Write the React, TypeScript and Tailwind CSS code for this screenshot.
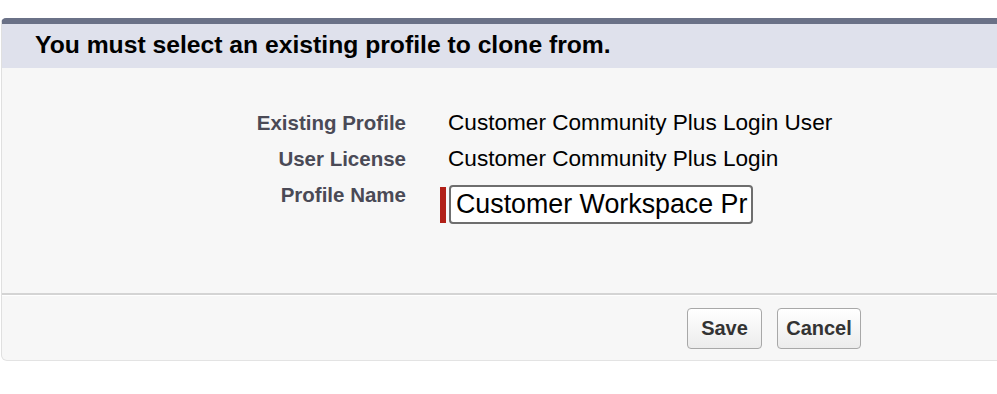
import React from "react";

export default function App() {
  return (
    <div className="w-[997px] h-[394px] overflow-hidden bg-white" style={{ fontFamily: '"Liberation Sans", Arial, sans-serif' }}>
      <div className="mt-[18px] ml-[1px] w-[1010px] rounded-t-[5px] rounded-bl-[6px] border-t-[6px] border-t-[#6a7187] border-l border-l-[#e0e0e0] border-b-[1.5px] border-b-[#e3e3e3] bg-[#f7f7f7] overflow-hidden">
        <div className="h-[44px] bg-[#dfe1ec] pl-[33px] pt-[7px]">
          <h2 className="text-[24.7px] leading-[28px] font-bold text-black">You must select an existing profile to clone from.</h2>
        </div>
        <div className="h-[225px] pt-[43px]">
          <div className="grid grid-cols-[404px_1fr] gap-x-[42px] gap-y-[12px] leading-[24px]">
            <div className="text-right font-bold text-[20.5px] text-[#4a4a56]">Existing Profile</div>
            <div className="text-black text-[22.6px]">Customer Community Plus Login User</div>
            <div className="text-right font-bold text-[20.5px] text-[#4a4a56]">User License</div>
            <div className="text-black text-[22.6px]">Customer Community Plus Login</div>
            <div className="text-right font-bold text-[20.5px] text-[#4a4a56]">Profile Name</div>
            <div className="-ml-[8px] flex items-center gap-[3px] pt-[2px]">
              <div className="w-[6px] h-[36px] bg-[#b11f17]" />
              <input
                type="text"
                defaultValue="Customer Workspace Profile"
                className="w-[304px] h-[39px] rounded-[4px] border-2 border-[#6e6e6e] bg-white pl-[5px] pr-[3px] text-[26.8px] text-black outline-none"
                style={{ fontFamily: '"Liberation Sans", Arial, sans-serif' }}
              />
            </div>
          </div>
        </div>
        <div className="border-t-2 border-t-[#d4d4d4]">
          <div className="border-t border-t-white h-[65px] flex items-center gap-[15px] pl-[685px]">
            <button className="w-[75px] h-[41px] rounded-[4px] border-[1.5px] border-[#a8a8a8] bg-gradient-to-b from-white to-[#ececec] text-[20px] font-bold text-[#333]">Save</button>
            <button className="w-[84px] h-[41px] rounded-[4px] border-[1.5px] border-[#a8a8a8] bg-gradient-to-b from-white to-[#ececec] text-[20px] font-bold text-[#333]">Cancel</button>
          </div>
        </div>
      </div>
    </div>
  );
}
